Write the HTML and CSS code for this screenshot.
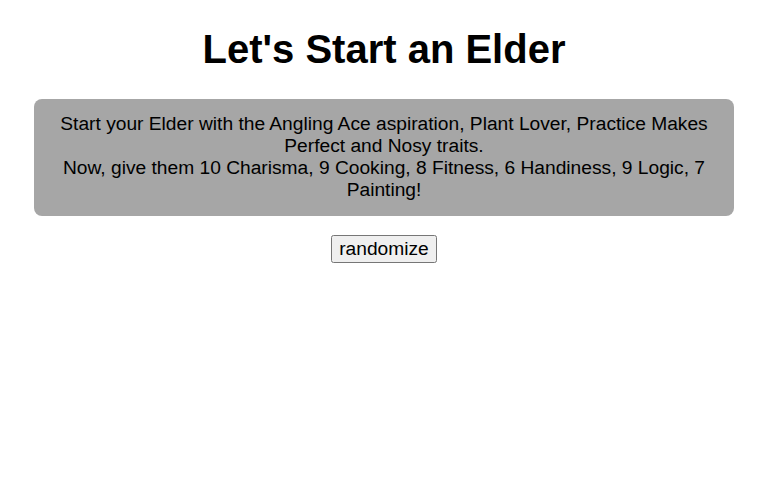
FILE: index.html
```html
<!DOCTYPE html>
<html lang="en">
<head>
  <meta charset="UTF-8">
  <meta name="viewport" content="width=device-width, initial-scale=1.0">
  <link rel="stylesheet" href="styles.css">
  <title>Let's Start an Elder</title>
</head>
<body>
  <h1>Let's Start an Elder</h1>
  <div class="challenge">
    <p>Start your Elder with the Angling Ace aspiration, Plant Lover, Practice Makes Perfect and Nosy traits.</p>
    <p>Now, give them 10 Charisma, 9 Cooking, 8 Fitness, 6 Handiness, 9 Logic, 7 Painting!</p>
  </div>
  <div class="actions">
    <button id="randomize">randomize</button>
  </div>
</body>
</html>
```

FILE: styles.css
```css
body {
  margin: 0;
  font-family: "Liberation Sans", Arial, sans-serif;
  text-align: center;
  background-color: white;
}

h1 {
  font-size: 40px;
  margin: 0.67em 0;
}

.challenge {
  width: 700px;
  margin: 0 auto;
  padding: 14px 0 15px;
  box-sizing: border-box;
  background-color: #a6a6a6;
  border-radius: 8px;
  font-size: 1.2em;
}

.challenge p {
  margin: 0;
  padding: 0 20px;
}

.actions {
  margin-top: 19px;
}

button {
  font-family: "Liberation Sans", Arial, sans-serif;
  font-size: 1.2em;
}
```
